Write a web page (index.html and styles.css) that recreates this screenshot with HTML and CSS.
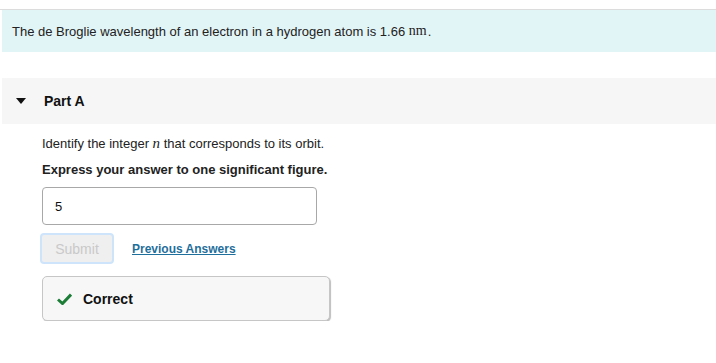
FILE: index.html
```html
<!DOCTYPE html>
<html lang="en">

<head>
    <meta charset="UTF-8">
    <meta name="viewport" content="width=device-width, initial-scale=1.0">
    <title>Part A</title>
    <link rel="stylesheet" href="styles.css">
</head>

<body>
    <div class="intro-wrap">
        <div class="intro">
            The de Broglie wavelength of an electron in a hydrogen atom is 1.66&nbsp;<span class="math">nm</span>.
        </div>
    </div>

    <div class="part-header">
        <span class="caret"></span>
        <span class="part-title">Part A</span>
    </div>

    <div class="part-body">
        <p class="question">Identify the integer <span class="math-i">n</span> that corresponds to its orbit.</p>
        <p class="instruction">Express your answer to one significant figure.</p>

        <div class="answer-box">5</div>

        <div class="actions">
            <button class="submit" disabled>Submit</button>
            <a class="prev-link" href="#">Previous Answers</a>
        </div>

        <div class="feedback">
            <svg class="check" width="15" height="12" viewBox="0 0 15 12">
                <path d="M1 6.5 L5.5 10.5 L14 1.5" fill="none" stroke="#1b7d36" stroke-width="3" />
            </svg>
            <span>Correct</span>
        </div>
    </div>
</body>

</html>
```

FILE: styles.css
```css
body {
    margin: 0;
    font-family: "Liberation Sans", Arial, sans-serif;
    font-size: 13px;
    color: #222;
    background: #fff;
}

.intro-wrap {
    margin-top: 9px;
    border-top: 1px solid #dcdcdc;
}

.intro {
    margin-left: 2px;
    height: 42px;
    padding-left: 10px;
    display: flex;
    align-items: center;
    background-color: #e2f5f6;
}

.math {
    font-family: "Liberation Serif", "DejaVu Serif", serif;
    font-size: 14px;
    margin-right: 1px;
}

.math-i {
    font-family: "Liberation Serif", "DejaVu Serif", serif;
    font-style: italic;
    font-size: 15px;
}

.part-header {
    margin: 26px 0 0 2px;
    height: 46px;
    background-color: #f6f6f6;
    display: flex;
    align-items: center;
}

.caret {
    width: 0;
    height: 0;
    margin-left: 14px;
    border-left: 5px solid transparent;
    border-right: 5px solid transparent;
    border-top: 6px solid #111;
}

.part-title {
    margin-left: 18px;
    font-size: 14px;
    font-weight: bold;
    color: #111;
}

.part-body {
    padding-left: 42px;
}

.question {
    margin: 11px 0 0;
    line-height: 17px;
}

.instruction {
    margin: 9px 0 0;
    line-height: 17px;
    font-weight: bold;
}

.answer-box {
    margin-top: 9px;
    width: 261px;
    height: 36px;
    padding-left: 12px;
    border: 1px solid #a8a8a8;
    border-radius: 4px;
    display: flex;
    align-items: center;
    color: #111;
}

.actions {
    margin-top: 8px;
    display: flex;
    align-items: center;
}

.submit {
    margin-left: -2px;
    width: 74px;
    height: 31px;
    border: 2px solid #cde4fb;
    border-radius: 4px;
    background: #efefef;
    color: #c9c9c9;
    font-family: "Liberation Sans", Arial, sans-serif;
    font-size: 14px;
}

.prev-link {
    margin-left: 18px;
    font-size: 12px;
    font-weight: bold;
    color: #1f6f9c;
}

.feedback {
    margin-top: 12px;
    width: 286px;
    height: 43px;
    border: 1px solid #c6c6c6;
    border-radius: 5px;
    background: #f7f7f7;
    box-shadow: 1px 1px 1px #bdbdbd;
    display: flex;
    align-items: center;
    font-size: 14px;
    font-weight: bold;
    color: #111;
}

.check {
    margin-left: 14px;
    margin-right: 11px;
}
```
